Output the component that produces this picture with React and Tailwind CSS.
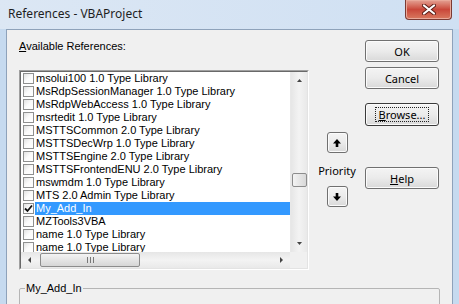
import React from "react";

const refs = [
  "msolui100 1.0 Type Library",
  "MsRdpSessionManager 1.0 Type Library",
  "MsRdpWebAccess 1.0 Type Library",
  "msrtedit 1.0 Type Library",
  "MSTTSCommon 2.0 Type Library",
  "MSTTSDecWrp 1.0 Type Library",
  "MSTTSEngine 2.0 Type Library",
  "MSTTSFrontendENU 2.0 Type Library",
  "mswmdm 1.0 Type Library",
  "MTS 2.0 Admin Type Library",
  "My_Add_In",
  "MZTools3VBA",
  "name 1.0 Type Library",
  "name 1.0 Type Library",
];

function Checkbox({ checked }) {
  return (
    <div className="flex h-[11px] w-[11px] shrink-0 items-center justify-center border border-[#8e8f8f] bg-gradient-to-br from-[#e2e2e2] via-[#fbfbfb] to-white">
      {checked && (
        <svg width="9" height="9" viewBox="0 0 9 9">
          <path d="M1 4.5 L3.5 7 L8 1.5" fill="none" stroke="#111" strokeWidth="1.8" />
        </svg>
      )}
    </div>
  );
}

function WinButton({ children, focused, className = "" }) {
  return (
    <div
      className={`flex items-center justify-center rounded-[3px] border bg-gradient-to-b from-[#f4f4f4] via-[#ebebeb] to-[#d9d9d9] shadow-[inset_0_0_0_1px_#fbfbfb] ${focused ? "border-[#3a3a3a]" : "border-[#707070]"} ${className}`}
    >
      {focused ? (
        <div className="flex h-[15px] items-center border border-dotted border-[#222] px-[3px]">{children}</div>
      ) : (
        children
      )}
    </div>
  );
}

function Arrow({ dir }) {
  const d = {
    up: "M2 4 L4.5 1 L7 4 Z",
    down: "M2 1 L4.5 4 L7 1 Z",
  }[dir];
  return (
    <svg width="9" height="5" viewBox="0 0 9 5">
      <path d={d} fill="#444" />
    </svg>
  );
}

function SideArrow({ dir }) {
  const d = dir === "left" ? "M4 1 L1 4 L4 7 Z" : "M1 1 L4 4 L1 7 Z";
  return (
    <svg width="5" height="8" viewBox="0 0 5 8">
      <path d={d} fill="#444" />
    </svg>
  );
}

function BoldArrow({ dir }) {
  return (
    <svg width="10" height="10" viewBox="0 0 10 10">
      {dir === "up" ? (
        <path d="M5 1 L9 5.5 L6.3 5.5 L6.3 9 L3.7 9 L3.7 5.5 L1 5.5 Z" fill="#000" />
      ) : (
        <path d="M5 9 L9 4.5 L6.3 4.5 L6.3 1 L3.7 1 L3.7 4.5 L1 4.5 Z" fill="#000" />
      )}
    </svg>
  );
}

export default function App() {
  return (
    <div className="relative h-[304px] w-[459px] overflow-hidden bg-[#c6daef] font-['Liberation_Sans',sans-serif] text-[11px] leading-[13px] text-black">
      {/* window corner against the dark desktop */}
      <svg className="absolute left-0 top-0" width="5" height="5" viewBox="0 0 5 5">
        <path d="M0 0 L5 0 L0 5 Z" fill="#3b3b3b" />
      </svg>

      {/* title bar */}
      <div className="relative flex h-[29px] items-start bg-gradient-to-r from-[#dce7f4] to-[#cfe0f3] pl-[8px] pt-[6px]">
        <span className="font-['Noto_Sans',sans-serif] text-[12px] leading-[15px] text-[#1e1e1e]">References - VBAProject</span>
        <div className="absolute right-[7px] top-0 flex h-[20px] w-[47px] items-center justify-center rounded-b-[4px] border border-t-0 border-[#7b3a33] bg-gradient-to-b from-[#e3a194] via-[#c9473a] to-[#d8785f] shadow-[inset_0_0_0_1px_#e9a99a]">
          <svg width="14" height="11" viewBox="0 0 14 11">
            <path d="M2 1.5 L12 9.5 M12 1.5 L2 9.5" stroke="#5a1d16" strokeWidth="4" strokeLinecap="round" />
            <path d="M2 1.5 L12 9.5 M12 1.5 L2 9.5" stroke="#fff" strokeWidth="2.2" strokeLinecap="round" />
          </svg>
        </div>
      </div>

      {/* client area */}
      <div className="mx-[6px] flex h-[275px] flex-col border-l border-r border-t border-[#8ea2ba] bg-[#f0f0f0] pl-[12px]">
        <div className="flex">
          {/* left column */}
          <div className="flex w-[290px] flex-col">
            <div className="mt-[10px]">
              <span className="underline">A</span>vailable References:
            </div>
            <div className="mt-[17px] h-[200px] border border-b-white border-l-[#a0a0a0] border-r-white border-t-[#a0a0a0]">
              <div className="flex h-full flex-col border border-b-[#e3e3e3] border-l-[#696969] border-r-[#e3e3e3] border-t-[#696969] bg-white">
                <div className="flex flex-1 overflow-hidden">
                  <div className="flex-1 overflow-hidden">
                    {refs.map((name, i) => {
                      const sel = name === "My_Add_In";
                      return (
                        <div key={i} className="flex h-[13px] items-center pl-[2px]">
                          <Checkbox checked={sel} />
                          <div
                            className={`ml-[1px] flex h-[13px] flex-1 items-center whitespace-nowrap pl-[1px] ${sel ? "bg-[#3399ff] text-white" : ""}`}
                          >
                            {name}
                          </div>
                        </div>
                      );
                    })}
                  </div>
                  {/* vertical scrollbar */}
                  <div className="flex w-[17px] flex-col border-l border-[#e8e8e8] bg-gradient-to-r from-[#e6e6e6] via-[#f3f3f3] to-[#e9e9e9]">
                    <div className="flex h-[17px] items-center justify-center">
                      <Arrow dir="up" />
                    </div>
                    <div className="flex-1">
                      <div className="mx-auto mt-[84px] h-[14px] w-[15px] rounded-[2px] border border-[#8c8c8c] bg-gradient-to-r from-[#f3f3f3] to-[#d8d8d8]" />
                    </div>
                    <div className="flex h-[17px] items-center justify-center">
                      <Arrow dir="down" />
                    </div>
                  </div>
                </div>
                {/* horizontal scrollbar */}
                <div className="flex h-[16px]">
                  <div className="flex flex-1 items-center bg-gradient-to-b from-[#e6e6e6] via-[#f3f3f3] to-[#e9e9e9]">
                    <div className="flex w-[17px] items-center justify-center">
                      <SideArrow dir="left" />
                    </div>
                    <div className="ml-[2px] flex h-[14px] w-[100px] items-center justify-center rounded-[2px] border border-[#8c8c8c] bg-gradient-to-b from-[#f4f4f4] to-[#d6d6d6]">
                      <div className="flex gap-[2px]">
                        <div className="h-[6px] w-px bg-[#777]" />
                        <div className="h-[6px] w-px bg-[#777]" />
                        <div className="h-[6px] w-px bg-[#777]" />
                      </div>
                    </div>
                    <div className="flex-1" />
                    <div className="flex w-[17px] items-center justify-center">
                      <SideArrow dir="right" />
                    </div>
                  </div>
                  <div className="w-[17px] bg-[#f0f0f0]" />
                </div>
              </div>
            </div>
          </div>

          {/* priority column */}
          <div className="flex w-[56px] flex-col items-center">
            <WinButton className="mt-[102px] h-[21px] w-[21px]">
              <BoldArrow dir="up" />
            </WinButton>
            <div className="mt-[11px] font-['Noto_Sans',sans-serif] text-[11px] leading-[13px]">Priority</div>
            <WinButton className="mt-[9px] h-[21px] w-[21px]">
              <BoldArrow dir="down" />
            </WinButton>
          </div>

          {/* buttons column */}
          <div className="flex w-[74px] flex-col font-['Noto_Sans',sans-serif] text-[11px]">
            <WinButton className="mt-[10px] h-[22px]">OK</WinButton>
            <WinButton className="mt-[5px] h-[22px]">Cancel</WinButton>
            <WinButton focused className="mt-[14px] h-[23px]">
              <span>
                <span className="underline">B</span>rowse...
              </span>
            </WinButton>
            <WinButton className="mt-[41px] h-[22px]">
              <span>
                <span className="underline">H</span>elp
              </span>
            </WinButton>
          </div>
        </div>

        {/* description group */}
        <fieldset className="mt-[12px] h-[70px] w-[421px] shrink-0 rounded-[2px] border border-[#b5b5b5] px-[5px]">
          <legend className="px-[1px]">My_Add_In</legend>
        </fieldset>
      </div>
    </div>
  );
}
